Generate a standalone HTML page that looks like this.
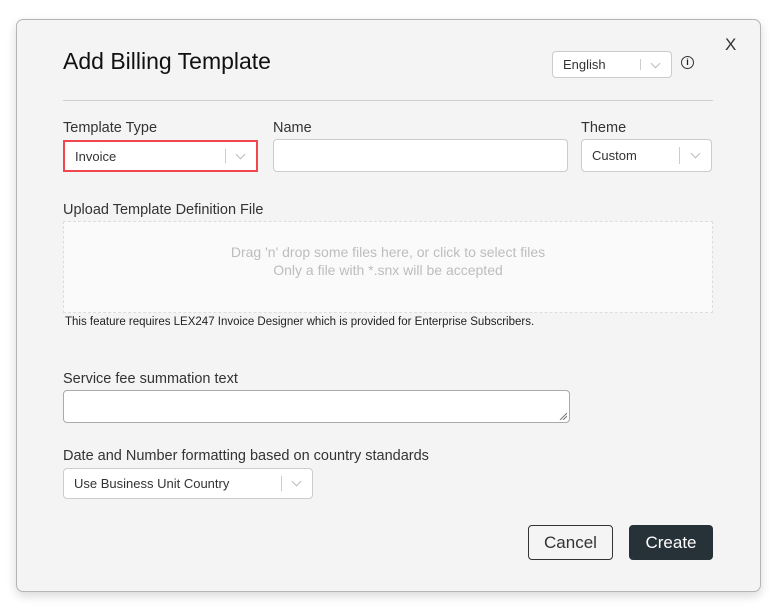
<!DOCTYPE html><html><head><style>
*{box-sizing:border-box}body{margin:0;width:777px;height:611px;background:#fff;font-family:"Liberation Sans",sans-serif;position:relative;overflow:hidden;color:#222}
.a{position:absolute}
.dlg{left:16px;top:19px;width:745px;height:573px;background:#f4f4f4;border:1px solid #b5b5b5;border-radius:7px;box-shadow:0 4px 10px rgba(0,0,0,.15)}
.lbl{font-size:14.5px;color:#333}
.sel{background:#fff;border:1px solid #ccc;border-radius:4px;font-size:13px;color:#333;padding-left:10px;display:flex;align-items:center}
.sel .sep{position:absolute;top:7px;bottom:7px;width:1px;background:#ccc}
.sel .chev{position:absolute;width:7px;height:7px;border-right:1px solid #bbb;border-bottom:1px solid #bbb;transform:rotate(45deg)}
</style></head><body>
<div class="a dlg"></div>
<div class="a" style="left:63px;top:48px;font-size:23px;color:#111">Add Billing Template</div>
<div class="a" style="left:725px;top:35px;font-size:17px;color:#333">X</div>
<div class="a sel" style="left:552px;top:51px;width:120px;height:27px;font-size:13px">English<div class="sep" style="right:30px"></div><div class="chev" style="right:12px;top:8px"></div></div>
<div class="a" style="left:681px;top:56px;width:13px;height:13px;border:1.3px solid #333;border-radius:50%;font-size:9px;text-align:center;line-height:11px;font-weight:bold">i</div>
<div class="a" style="left:63px;top:100px;width:650px;height:1px;background:#d0d0d0"></div>
<div class="a lbl" style="left:63px;top:120px">Template Type</div>
<div class="a lbl" style="left:273px;top:120px">Name</div>
<div class="a lbl" style="left:581px;top:120px">Theme</div>
<div class="a sel" style="left:63px;top:140px;width:195px;height:32px;border:2px solid #f0474c;border-radius:0">Invoice<div class="sep" style="right:30px"></div><div class="chev" style="right:12px;top:9px"></div></div>
<div class="a sel" style="left:273px;top:139px;width:295px;height:33px"></div>
<div class="a sel" style="left:581px;top:139px;width:131px;height:33px">Custom<div class="sep" style="right:31px"></div><div class="chev" style="right:12px;top:10px"></div></div>
<div class="a lbl" style="left:63px;top:202px">Upload Template Definition File</div>
<div class="a" style="left:63px;top:221px;width:650px;height:92px;background:#fafafa;border:1px dashed #ddd;text-align:center;color:#bdbdbd;font-size:14px;padding-top:21px;line-height:18px">Drag 'n' drop some files here, or click to select files<br>Only a file with *.snx will be accepted</div>
<div class="a" style="left:65px;top:316px;font-size:11.5px;color:#222">This feature requires LEX247 Invoice Designer which is provided for Enterprise Subscribers.</div>
<div class="a lbl" style="left:63px;top:371px">Service fee summation text</div>
<div class="a" style="left:63px;top:390px;width:507px;height:33px;background:#fff;border:1px solid #aaa;border-radius:4px"><svg class="a" style="right:2px;bottom:2px" width="8" height="8"><path d="M1 8L8 1M4 8L8 4" stroke="#777" stroke-width="1"/></svg></div>
<div class="a lbl" style="left:63px;top:448px">Date and Number formatting based on country standards</div>
<div class="a sel" style="left:63px;top:468px;width:250px;height:31px">Use Business Unit Country<div class="sep" style="right:30px"></div><div class="chev" style="right:12px;top:9px"></div></div>
<div class="a" style="left:528px;top:525px;width:85px;height:35px;border:1px solid #333;border-radius:4px;font-size:17px;text-align:center;line-height:33px;color:#333">Cancel</div>
<div class="a" style="left:629px;top:525px;width:84px;height:35px;background:#263238;border-radius:4px;font-size:17px;text-align:center;line-height:35px;color:#fff">Create</div>
</body></html>
